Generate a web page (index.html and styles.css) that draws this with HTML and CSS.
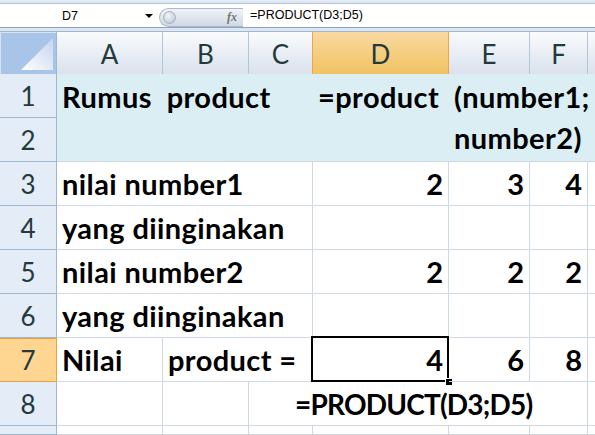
FILE: index.html
```html
<!DOCTYPE html>
<html>
<head>
<meta charset="utf-8">
<link rel="stylesheet" href="styles.css">
</head>
<body>
<div class="app">
  <div class="topstrip"></div>
  <div class="fbar">
    <div class="namebox"><span class="name">D7</span><span class="arrow"></span></div>
    <div class="fxpill"><span class="knob"></span><span class="fx">fx</span></div>
    <div class="formula">=PRODUCT(D3;D5)</div>
  </div>
  <div class="sep"></div>
  <div class="sheet">
    <div class="row hdr">
      <div class="corner">
        <svg width="55" height="41" viewBox="0 0 55 41">
          <defs>
            <linearGradient id="tri" x1="0" y1="1" x2="1" y2="0">
              <stop offset="0" stop-color="#ffffff"/>
              <stop offset="1" stop-color="#c4d5ee"/>
            </linearGradient>
          </defs>
          <polygon points="21,38 53,38 53,6" fill="url(#tri)"/>
        </svg>
      </div>
      <div class="ch">A</div>
      <div class="ch">B</div>
      <div class="ch">C</div>
      <div class="ch ch-sel">D</div>
      <div class="ch">E</div>
      <div class="ch">F</div>
      <div class="ch ch-last"></div>
    </div>

    <div class="row">
      <div class="rh">1</div>
      <div class="c blue span3 pre">Rumus  product</div>
      <div class="c blue">=product</div>
      <div class="c blue span3">(number1;</div>
    </div>
    <div class="row">
      <div class="rh">2</div>
      <div class="c blue span4 edge"></div>
      <div class="c blue span3 edge b2">number2)</div>
    </div>

    <div class="row">
      <div class="rh">3</div>
      <div class="c span3">nilai number1</div>
      <div class="c num">2</div>
      <div class="c num">3</div>
      <div class="c num">4</div>
      <div class="c"></div>
    </div>
    <div class="row">
      <div class="rh">4</div>
      <div class="c span3">yang diinginakan</div>
      <div class="c"></div>
      <div class="c"></div>
      <div class="c"></div>
      <div class="c"></div>
    </div>
    <div class="row">
      <div class="rh">5</div>
      <div class="c span3">nilai number2</div>
      <div class="c num">2</div>
      <div class="c num">2</div>
      <div class="c num">2</div>
      <div class="c"></div>
    </div>
    <div class="row">
      <div class="rh">6</div>
      <div class="c span3">yang diinginakan</div>
      <div class="c"></div>
      <div class="c"></div>
      <div class="c"></div>
      <div class="c"></div>
    </div>
    <div class="row">
      <div class="rh rh-sel">7</div>
      <div class="c">Nilai</div>
      <div class="c span2">product =</div>
      <div class="c num active">4<span class="selbox"></span><span class="handle"></span></div>
      <div class="c num">6</div>
      <div class="c num">8</div>
      <div class="c"></div>
    </div>
    <div class="row">
      <div class="rh">8</div>
      <div class="c"></div>
      <div class="c"></div>
      <div class="c span4 indent caps">=PRODUCT(D3;D5)</div>
      <div class="c"></div>
    </div>
    <div class="row stub">
      <div class="rh"></div>
      <div class="c"></div>
      <div class="c"></div>
      <div class="c"></div>
      <div class="c"></div>
      <div class="c"></div>
      <div class="c"></div>
      <div class="c"></div>
    </div>
  </div>
</div>
</body>
</html>
```

FILE: styles.css
```css
html, body {
  margin: 0;
  padding: 0;
}
body {
  width: 595px;
  height: 435px;
  overflow: hidden;
  background: #ffffff;
  font-family: Lato, "Liberation Sans", sans-serif;
}
.app {
  width: 595px;
  height: 435px;
  overflow: hidden;
}
.topstrip {
  height: 3px;
  background: linear-gradient(#e9f1f8, #d4e1ef);
  border-bottom: 1px solid #b7c8dc;
}
.fbar {
  display: flex;
  height: 23px;
  border-bottom: 1px solid #8fa3bd;
  background: #ffffff;
}
.namebox {
  width: 159px;
  display: flex;
  align-items: center;
}
.name {
  width: 140px;
  text-align: center;
  font-family: "Liberation Sans", Arial, sans-serif;
  font-size: 12.5px;
  color: #000;
}
.arrow {
  margin-left: 5px;
  width: 0;
  height: 0;
  border-left: 4px solid transparent;
  border-right: 4px solid transparent;
  border-top: 4px solid #000;
}
.fxpill {
  box-sizing: border-box;
  width: 84px;
  height: 19px;
  margin-top: 4px;
  border: 1px solid #a9b8ca;
  border-right: none;
  border-radius: 10px 0 0 10px;
  background: linear-gradient(#f1f4f9, #cfd9e6);
  display: flex;
  align-items: center;
  justify-content: space-between;
  padding: 0 6px 0 3px;
}
.knob {
  width: 11px;
  height: 11px;
  border-radius: 50%;
  background: radial-gradient(circle at 40% 35%, #f4f6f9, #b4bfcc);
  border: 1px solid #a3afbe;
}
.fx {
  font-family: "Liberation Serif", serif;
  font-style: italic;
  font-weight: bold;
  font-size: 12px;
  color: #6d7a6b;
}
.formula {
  padding-left: 7px;
  font-family: "Liberation Sans", Arial, sans-serif;
  font-size: 12.5px;
  line-height: 23px;
  color: #000;
}
.sep {
  height: 3px;
  background: #dde6f1;
}
.sheet {
  border-top: 1px solid #9eb6ce;
}
.row {
  display: grid;
  grid-template-columns: 57px 106px 86px 64px 136px 81px 58px 1fr;
  height: 44px;
}
.hdr {
  height: 42px;
}
.stub {
  height: 9px;
}
.corner {
  box-sizing: border-box;
  border-right: 1px solid #9eb6ce;
  border-bottom: 1px solid #9eb6ce;
  background: #a9c4e9;
  box-shadow: inset 1px 1px 0 #d8e3f3;
  display: flex;
}
.ch {
  box-sizing: border-box;
  border-right: 1px solid #b3c5d9;
  border-bottom: 1px solid #9eb6ce;
  background: linear-gradient(#f9fbfd, #d9e1ec);
  text-align: center;
  font-size: 26px;
  line-height: 41px;
  padding-top: 2px;
  color: #233a3b;
}
.ch-sel {
  background: linear-gradient(#f9d9a2, #f1c25f);
  border-right: 1px solid #f0a648;
  border-left: 1px solid #f0a648;
  border-bottom: 1px solid #ee9b36;
  margin-left: -1px;
}
.ch-last {
  border-right: none;
}
.rh {
  box-sizing: border-box;
  border-right: 1px solid #9eb6ce;
  border-bottom: 1px solid #9eb6ce;
  background: #e4ecf7;
  text-align: center;
  font-size: 26px;
  line-height: 1;
  display: flex;
  align-items: flex-end;
  justify-content: center;
  padding-bottom: 8px;
  color: #233a3b;
}
.rh-sel {
  background: #ffd592;
  border-right: 1px solid #f0a13e;
  border-bottom: 1px solid #f0a13e;
  box-shadow: inset 0 1px 0 #f0a13e;
}
.c {
  box-sizing: border-box;
  position: relative;
  border-right: 1px solid #d0d7e5;
  border-bottom: 1px solid #d0d7e5;
  padding: 0 5px 7px 5px;
  display: flex;
  align-items: flex-end;
  font-weight: bold;
  font-size: 29px;
  letter-spacing: 0.4px;
  line-height: 1;
  color: #000;
  white-space: nowrap;
}
.caps {
  font-size: 28px;
  letter-spacing: -0.8px;
}
.blue {
  background: #dbeef4;
  border-right: none;
  border-bottom: none;
}
.edge {
  border-bottom: 1px solid #d0d7e5;
}
.b2 {
  padding-bottom: 9px;
}
.pre {
  white-space: pre;
}
.span2 { grid-column: span 2; }
.span3 { grid-column: span 3; }
.span4 { grid-column: span 4; }
.num {
  justify-content: flex-end;
  letter-spacing: 0;
}
.indent {
  padding-left: 46px;
}
.selbox {
  position: absolute;
  left: -2px;
  top: -2px;
  right: -1px;
  bottom: -1px;
  border: 2px solid #000;
}
.handle {
  position: absolute;
  right: -4px;
  bottom: -4px;
  width: 6px;
  height: 6px;
  background: #000;
  border: 1px solid #fff;
  border-width: 1px 0 0 1px;
}
```
